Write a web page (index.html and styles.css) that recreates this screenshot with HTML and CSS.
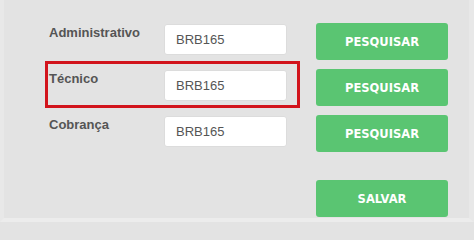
FILE: index.html
```html
<!DOCTYPE html>
<html lang="pt">
<head>
<meta charset="utf-8">
<title>Formulário</title>
<link rel="stylesheet" href="styles.css">
</head>
<body>
<div class="panel">
  <div class="form">
    <div class="row">
      <label class="label">Administrativo</label>
      <div class="input">BRB165</div>
      <button class="btn">PESQUISAR</button>
    </div>
    <div class="row">
      <label class="label">Técnico</label>
      <div class="input">BRB165</div>
      <button class="btn">PESQUISAR</button>
    </div>
    <div class="row">
      <label class="label">Cobrança</label>
      <div class="input">BRB165</div>
      <button class="btn">PESQUISAR</button>
    </div>
    <div class="row row-save">
      <button class="btn">SALVAR</button>
    </div>
  </div>
  <div class="highlight"></div>
</div>
</body>
</html>
```

FILE: styles.css
```css
html, body {
  margin: 0;
  padding: 0;
  background: #e3e3e3;
}

.panel {
  position: relative;
  width: 474px;
  height: 222px;
  box-sizing: border-box;
  background: #e3e3e3;
  border-left: 4px solid #e8e8e8;
  border-right: 5px solid #e8e8e8;
  border-bottom: 4px solid #ececec;
  overflow: hidden;
}

.form {
  display: flex;
  flex-direction: column;
  gap: 9px;
  padding: 23px 0 0 45px;
}

.row {
  display: flex;
  align-items: flex-start;
}

.label {
  width: 115px;
  margin-top: 2px;
  font-family: "Liberation Sans", Arial, sans-serif;
  font-weight: bold;
  font-size: 13px;
  line-height: 15px;
  color: #555555;
}

.input {
  box-sizing: border-box;
  width: 123px;
  height: 31px;
  margin-top: 1px;
  padding-left: 11px;
  background: #ffffff;
  border: 1px solid #dcdcdc;
  border-radius: 3px;
  font-family: "Liberation Sans", Arial, sans-serif;
  font-size: 13px;
  line-height: 29px;
  color: #555555;
}

.btn {
  box-sizing: border-box;
  width: 132px;
  height: 37px;
  margin-left: 29px;
  padding: 0;
  border: none;
  border-radius: 3px;
  background: #5ac572;
  color: #ffffff;
  font-family: "DejaVu Sans", Verdana, sans-serif;
  font-weight: bold;
  font-size: 11.5px;
  text-align: center;
}

.row-save {
  margin-top: 19px;
  padding-left: 238px;
}

.highlight {
  position: absolute;
  left: 41px;
  top: 61px;
  width: 255px;
  height: 47px;
  box-sizing: border-box;
  border: 3px solid #d2141c;
}
```
